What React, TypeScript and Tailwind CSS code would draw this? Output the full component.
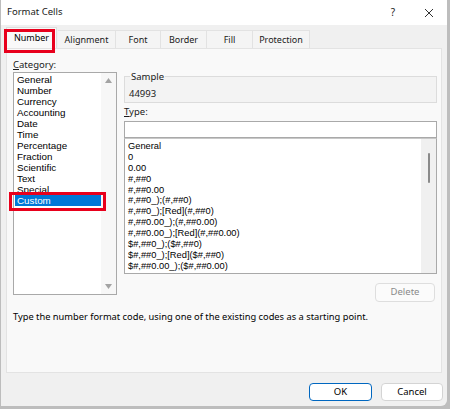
import React from 'react';

const categories = [
  'General', 'Number', 'Currency', 'Accounting', 'Date', 'Time',
  'Percentage', 'Fraction', 'Scientific', 'Text', 'Special', 'Custom',
];

const typeCodes = [
  'General',
  '0',
  '0.00',
  '#,##0',
  '#,##0.00',
  '#,##0_);(#,##0)',
  '#,##0_);[Red](#,##0)',
  '#,##0.00_);(#,##0.00)',
  '#,##0.00_);[Red](#,##0.00)',
  '$#,##0_);($#,##0)',
  '$#,##0_);[Red]($#,##0)',
  '$#,##0.00_);($#,##0.00)',
];

const tabs = [
  { label: 'Alignment', w: 'w-[58px]' },
  { label: 'Font', w: 'w-[45px]' },
  { label: 'Border', w: 'w-[46px]' },
  { label: 'Fill', w: 'w-[46px]' },
  { label: 'Protection', w: 'w-[57px]' },
];

export default function App() {
  return (
    <div className="w-[450px] h-[409px] bg-[#bdbdbd] overflow-hidden font-['Noto_Sans',sans-serif] text-[#1a1a1a]">
      <div className="ml-[1px] w-[446px] h-[406px] bg-[#f0f0f0] flex flex-col rounded-br-[6px] overflow-hidden">
        {/* title bar */}
        <div className="h-[25px] bg-white flex items-center pl-[6px] shrink-0">
          <span className="text-[9.5px] flex-1">Format Cells</span>
          <span className="text-[10px] w-[14px] text-center mr-[24px]">?</span>
          <svg width="10" height="10" viewBox="0 0 10 10" className="mr-[13px]">
            <path d="M1 1 L9 9 M9 1 L1 9" stroke="#333" strokeWidth="1" />
          </svg>
        </div>

        {/* tabs */}
        <div className="flex items-end h-[23px] pl-[5px] shrink-0">
          <div className="relative w-[51px] h-[21px] bg-[#f9f9f9] border border-b-0 border-[#dedede] flex items-center justify-center text-[9px] text-black">
            Number
            <span className="absolute left-[-3px] top-[1px] w-[51px] h-[24px] border-[3px] border-[#e8001c]" />
          </div>
          <div className="w-[1px]" />
          {tabs.map(t => (
            <div
              key={t.label}
              className={`${t.w} h-[18px] bg-[#f4f4f4] border-t border-r border-[#e2e2e2] flex items-center justify-center text-[9px]`}
            >
              {t.label}
            </div>
          ))}
        </div>

        {/* tab page */}
        <div className="ml-[5px] w-[436px] h-[325px] bg-[#f9f9f9] border border-[#e3e3e3] shrink-0">
          <div className="flex pl-[6px] pt-[9px]">
            {/* category column */}
            <div className="w-[104px]">
              <div className="text-[9.5px] leading-[13px]"><span className="underline">C</span>ategory:</div>
              <div className="mt-[1px] h-[223px] bg-white border border-[#a9a9a9] flex">
                <div className="flex-1 pt-[1px] pl-[1px] font-['Liberation_Sans',Arial,sans-serif]">
                  {categories.map(c => (
                    <div
                      key={c}
                      className={`h-[11px] leading-[11px] text-[9.8px] pl-[2px] ${c === 'Custom' ? 'bg-[#0078d7] text-white relative' : 'text-black'}`}
                    >
                      {c}
                      {c === 'Custom' && (
                        <span className="absolute left-[-6px] top-[-3px] w-[97px] h-[19px] border-[3px] border-[#e8001c]" />
                      )}
                    </div>
                  ))}
                </div>
                <div className="w-[15px] bg-[#f7f7f7] flex flex-col items-center justify-between py-[5px]">
                  <svg width="7" height="5" viewBox="0 0 7 5"><path d="M3.5 0 L7 5 L0 5 Z" fill="#a3a3a3" /></svg>
                  <svg width="7" height="5" viewBox="0 0 7 5"><path d="M0 0 L7 0 L3.5 5 Z" fill="#a3a3a3" /></svg>
                </div>
              </div>
            </div>

            {/* right column */}
            <div className="ml-[7px] w-[313px]">
              <fieldset className="mt-[13px] h-[32px] border border-[#dcdcdc] bg-[#f3f3f3] px-[4px]">
                <legend className="text-[9.5px] leading-[11px] px-[1px] ml-[1px]">Sample</legend>
                <div className="text-[9.5px] leading-[14px] pt-[5px]">44993</div>
              </fieldset>
              <div className="text-[9.5px] leading-[13px] mt-[2px]"><span className="underline">T</span>ype:</div>
              <div className="h-[17px] bg-white border border-[#a9a9a9] mt-[3px]" />
              <div className="h-[136px] bg-white border border-[#a9a9a9] border-t-[#c8c8c8] flex">
                <div className="flex-1 pl-[3px] pt-[2px] font-['Liberation_Sans',Arial,sans-serif] text-black">
                  {typeCodes.map(t => (
                    <div key={t} className="h-[10.9px] leading-[11px] text-[9.3px] whitespace-nowrap">{t}</div>
                  ))}
                </div>
                <div className="w-[15px] bg-[#f0f0f0] flex justify-center pt-[14px]">
                  <div className="w-[2px] h-[30px] bg-[#8a8a8a] rounded-full" />
                </div>
              </div>
              <div className="flex justify-end mt-[9px] pr-[2px]">
                <div className="w-[60px] h-[19px] border border-[#dedede] rounded-[4px] bg-[#fbfbfb] flex items-center justify-center text-[9.5px] text-[#8a8a8a]">
                  Delete
                </div>
              </div>
            </div>
          </div>
          <div className="pl-[6px] mt-[9px] text-[9.3px] leading-[12px] text-black">
            Type the number format code, using one of the existing codes as a starting point.
          </div>
        </div>

        {/* buttons */}
        <div className="flex justify-end gap-[9px] pr-[4px] mt-[10px]">
          <div className="w-[63px] h-[18px] bg-white border-[1.5px] border-[#0067c0] rounded-[4px] flex items-center justify-center text-[9.5px] text-black">OK</div>
          <div className="w-[62px] h-[18px] bg-white border border-[#d4d4d4] rounded-[4px] flex items-center justify-center text-[9.5px] text-black">Cancel</div>
        </div>
      </div>
    </div>
  );
}
